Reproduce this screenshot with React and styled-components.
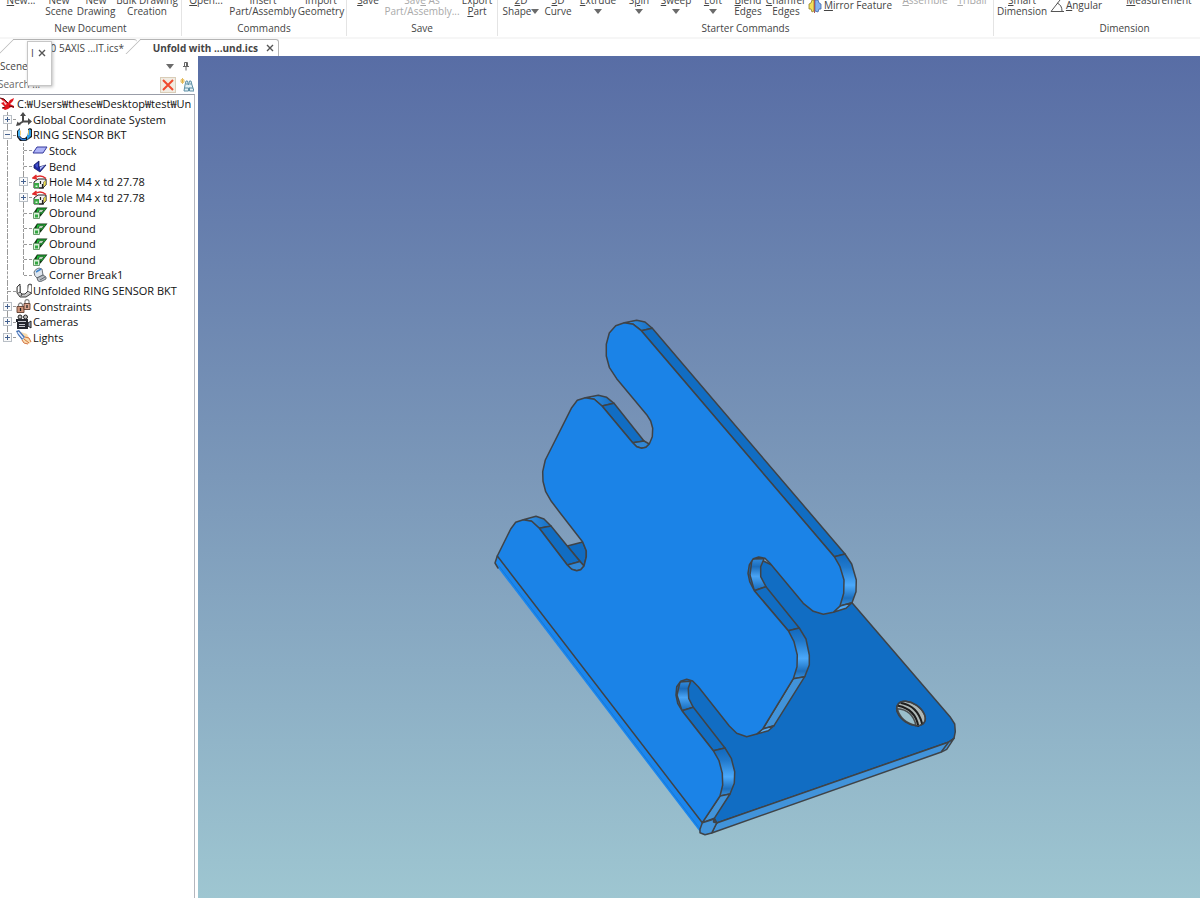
import React from 'react'
import styled, { createGlobalStyle } from 'styled-components'

const GlobalStyle = createGlobalStyle`
    * { box-sizing: border-box; }
    body {
        margin: 0;
        background: #fff;
        color: #444;
        font-family: "Open Sans", "Noto Sans CJK KR", sans-serif;
        font-size: 10px;
        overflow: hidden;
    }
    button, input { font: inherit; color: inherit; }
`

const Page = styled.div`
    display: flex;
    flex-direction: column;
    height: 100vh;
`

/* ribbon */

const Ribbon = styled.header`
    display: flex;
    flex: none;
    height: 39px;
    overflow: hidden;
    border-bottom: 2px solid #f6f6f6;
`

const Group = styled.section`
    display: flex;
    flex: none;
    flex-direction: column;
    justify-content: flex-end;
    width: ${({ width }) => width}px;
    height: 36px;
    border-right: 1px solid #e4e4e4;
`

const Tools = styled.div`
    display: flex;
    flex: none;
    align-items: flex-end;
    padding-left: 1px;
`

const GroupName = styled.div`
    flex: none;
    height: 19px;
    line-height: 22px;
    text-align: center;
`

const ToolButton = styled.button`
    display: flex;
    flex: none;
    flex-direction: column;
    align-items: center;
    width: ${({ width }) => width}px;
    padding: 0;
    border: 0;
    background: none;
    line-height: 11px;
    white-space: nowrap;
    color: ${({ disabled }) => disabled ? '#a9a9a9' : '#444'};
`

const Line = styled.span`
    display: flex;
    align-items: center;
    height: 11px;
`

const WideButton = styled(ToolButton)`
    flex-direction: row;
    justify-content: center;
    gap: 2px;
    height: 23px;
`

const Arrow = styled.span`
    border: 4px solid transparent;
    border-top: 5px solid #6b6b6b;
    border-bottom: 0;
`

/* document tabs */

const TabBar = styled.nav`
    position: relative;
    display: flex;
    flex: none;
    height: 17px;
`

const Tab = styled.div`
    position: relative;
    display: flex;
    align-items: center;
    justify-content: flex-end;
    width: ${({ width }) => width}px;
    margin-left: ${({ active }) => active ? 3 : 13}px;
    padding-right: ${({ active }) => active ? 4 : 13}px;
    border-top: 1px solid #b5b5b5;
    border-right: ${({ active }) => active ? '1px solid #b5b5b5' : '0'};
    border-top-right-radius: 3px;
    font-weight: ${({ active }) => active ? 700 : 400};
    white-space: nowrap;
    gap: 8px;

    &::before {
        content: '';
        position: absolute;
        top: -1px;
        left: -7px;
        width: 1px;
        height: 15px;
        background: #b5b5b5;
        transform: skewX(-45deg);
    }
`

const CloseButton = styled.button`
    display: flex;
    padding: 0;
    border: 0;
    background: none;
`

const Popup = styled.div`
    position: absolute;
    top: 2px;
    left: 27px;
    z-index: 2;
    display: flex;
    justify-content: space-between;
    align-items: flex-start;
    width: 25px;
    height: 45px;
    padding: 7px 5px 0 3px;
    border: 1px solid #c6c6c6;
    background: #fff;
    box-shadow: 1px 1px 3px rgba(0, 0, 0, .25);
    line-height: 8px;
`

/* scene browser */

const Main = styled.main`
    display: flex;
    flex: 1;
    min-height: 0;
`

const Sidebar = styled.aside`
    display: flex;
    flex: none;
    flex-direction: column;
    width: 195px;
    margin-right: 3px;
`

const SideHead = styled.div`
    display: flex;
    align-items: center;
    height: 20px;
    padding-right: 5px;
    gap: 8px;
`

const SideTitle = styled.span`
    flex: 1;
`

const SearchRow = styled.div`
    display: flex;
    align-items: center;
    height: 18px;
    gap: 3px;
`

const SearchInput = styled.input`
    flex: 1;
    min-width: 0;
    height: 18px;
    padding: 0 0 2px;
    margin-left: -2px;
    border: 0;
    outline: 0;

    &::placeholder { color: #666; opacity: 1; }
`

const IconButton = styled.button`
    display: flex;
    align-items: center;
    justify-content: center;
    width: 16px;
    height: 16px;
    padding: 0;
    border: ${({ $framed }) => $framed ? '1px solid #d9cdb8' : '0'};
    background: ${({ $framed }) => $framed ? '#f1ece2' : 'none'};
`

const TreeBox = styled.div`
    flex: 1;
    min-height: 0;
    padding-top: 1px;
    border-top: 1px solid #999da8;
    border-right: 1px solid #b4b6bd;
    overflow: hidden;
`

const Tree = styled.ul`
    display: grid;
    grid-template-rows: repeat(16, 1fr);
    height: 249px;
    margin: 0;
    padding: 0;
    list-style: none;
    color: #111;
    font-size: 11px;
`

const Row = styled.li`
    display: flex;
    align-items: center;
    min-height: 0;
    white-space: nowrap;
`

const Gutter = styled.span`
    position: relative;
    display: flex;
    flex: none;
    align-self: stretch;
    align-items: center;
    justify-content: center;
    width: 16px;

    &::before {
        content: '';
        position: absolute;
        top: 0;
        left: 7px;
        height: ${({ $last }) => $last ? '50%' : '100%'};
        border-left: ${({ $line }) => $line ? '1px dashed #999' : '0'};
    }

    &::after {
        content: '';
        position: absolute;
        top: 50%;
        left: 8px;
        width: 8px;
        border-top: ${({ $branch }) => $branch ? '1px dashed #999' : '0'};
    }
`

const Expander = styled.button`
    position: relative;
    z-index: 1;
    display: flex;
    width: 9px;
    height: 9px;
    margin-right: 1px;
    padding: 0;
    border: 1px solid #b9bfc6;
    background: #fafafa;
`

const Label = styled.span`
    padding-left: 1px;
    line-height: 15px;
`

const Viewport = styled.section`
    flex: 1;
    min-width: 0;
    background: linear-gradient(#586da5, #7b98b9 50%, #9ec6d1);

    svg {
        display: block;
        width: 100%;
        height: 100%;
    }
`

const CloseIcon = () => (
    <svg width="8" height="8" viewBox="0 0 8 8" stroke="#555" strokeWidth="1.4">
        <path d="M1 1l6 6M7 1l-6 6" />
    </svg>
)

const MirrorIcon = () => (
    <svg width="14" height="14" viewBox="0 0 14 14">
        <path d="M6 1v11l-2 1-1-3H1V5l2-1 1-3z" fill="#f2df5a" stroke="#8f7d2c" strokeWidth=".8" />
        <path d="M7 1v11l3 1 1-3h2V5l-2-1-1-3z" fill="#84b1ef" stroke="#4167a8" strokeWidth=".8" />
        <path d="M6.500 0v14" stroke="#a55" />
    </svg>
)

const AngularIcon = () => (
    <svg width="14" height="14" viewBox="0 0 14 14" fill="none" stroke="#555">
        <path d="M14 12.500H1L10 1M7 4q5 2 5 8" />
    </svg>
)

const BinocularsIcon = () => (
    <svg width="14" height="14" viewBox="0 0 14 14">
        <path d="M2.500 0v6M0 3h5M1 1l3 4M4 1L1 5" stroke="#e0ad3a" strokeWidth=".8" />
        <path d="M4 13l1-6 1-4h1.500l1 4 1-4H11l1 4 2 6H9.500v-3h-1v3z" fill="#e3f0f5" stroke="#5c8ea5" />
        <path d="M5 10h3M9 10h4M6 6h2M9.500 6h2" stroke="#5c8ea5" />
    </svg>
)

const PinIcon = () => (
    <svg width="8" height="10" viewBox="0 0 8 10" fill="none" stroke="#666">
        <path d="M2.500 5V1.500h3V5M1 5.500h6M4 6v3.500M4.500 1v4" />
    </svg>
)

const icons = {
    scene: (
        <g>
            <path d="M0 2l4 1 4 4 2-3 4-2-1 3-3 3 4 2v2l-3-1-3 2-3 1-3-2 3-1-4-4 3-1z" fill="#e0141c" />
            <path d="M0 2l4 1 4 4M9 10l5 1M2 12l3-1" stroke="#5e0a0e" fill="none" />
            <path d="M3 4l4 4-2 1z" fill="#fff" opacity=".8" />
        </g>
    ),
    axes: (
        <g fill="#4a4a4a">
            <path d="M7 3v6.500h6M7 9.500L3 12" stroke="#4a4a4a" strokeWidth="2" fill="none" />
            <path d="M4 4l3-4 3 4zM12 6l4 3.500L12 13zM0 14l1.500-4.500L5 13z" />
        </g>
    ),
    bracket: (
        <g strokeLinejoin="round">
            <path d="M1 4l3-3v8l2 2h3l3-3V2l2-1 2 1v8l-6 4H4l-3-4z" fill="#1b1b1b" />
            <path d="M2 4l2-2v7l-1 1-1-1z" fill="#47b4f5" />
            <path d="M13 2l2 1v6l-4 4V9z" fill="#2b9de8" />
            <path d="M3 10l3 2.500h4" stroke="#2b7fe0" strokeWidth="1.500" fill="none" />
            <path d="M4.500 3.500v5M12.500 3v5" stroke="#f1c453" strokeWidth=".8" />
        </g>
    ),
    stock: <path d="M5 4h10l-4 6H1z" fill="#aeb4f7" stroke="#34389b" />,
    bend: (
        <g strokeLinejoin="round">
            <path d="M2 6l5-4v6l7-2-6 7-6-4z" fill="#20299c" stroke="#151b62" strokeWidth=".8" />
            <path d="M8 8l5-2-5 5z" fill="#b5c2fb" />
            <path d="M3 6l3-2v4l-1 1z" fill="#4453cf" />
        </g>
    ),
    hole: (
        <g>
            <path d="M2 8l4-3h8v6l-3 3H2z" fill="#f2f2f2" stroke="#222" />
            <path d="M11.500 8l2.500-2v5l-2.500 2z" fill="#efe04a" stroke="#555" strokeWidth=".6" />
            <path d="M2 9h5v5H2z" fill="#3aa845" />
            <path d="M3.500 11.500h2v1.500h-2z" fill="#dff5df" />
            <path d="M8.500 7v3M10.500 10v4M7 14h5" stroke="#222" strokeWidth="1.200" />
            <path d="M2 4.500q6-5 12 0M4.500 1L1 4l4 1" fill="none" stroke="#e02a2a" strokeWidth="1.500" />
        </g>
    ),
    obround: (
        <g>
            <path d="M5 2.500h10.500L8.500 11.500H7V7H2z" fill="#143a16" />
            <path d="M5.500 3.500h8.500l-4 5H4z" fill="#1dc238" />
            <path d="M7.500 4.800h4.500l-2 2.400H6z" fill="#e9f7e9" stroke="#143a16" strokeWidth=".7" />
            <path d="M1.500 7.500h6v6h-6z" fill="#d8f0d8" stroke="#6a9c6c" />
            <path d="M3 9.500h3v3H3z" fill="#34a843" />
        </g>
    ),
    corner: (
        <g stroke="#4c545c" strokeWidth=".8" strokeLinejoin="round">
            <path d="M2 5q1-3 5-4l3 1 1 6-6 3q-3-2-3-6z" fill="#dfe6ee" />
            <path d="M5 11l6-3 3 2v2l-6 3q-3-1-3-4z" fill="#b9bec4" />
            <path d="M4 5l5-3" stroke="#3e86cf" strokeWidth="1.500" />
            <path d="M8 13l5-3" fill="none" />
        </g>
    ),
    unfolded: (
        <g stroke="#2b2b2b" strokeWidth=".9" strokeLinejoin="round" fill="#c9c9c9">
            <path d="M1 4l3-3v8l2 2h3l3-3V2l2-1 2 1v8l-6 4H4l-3-4z" />
            <path d="M4 3v6l-2 1M6 11l-1 2M12 8l3 2" fill="none" />
            <path d="M13 2l2 1v6l-3-1z" fill="#fff" stroke="none" />
            <path d="M2 4l1.500-1v6L2 9.500z" fill="#fff" stroke="none" />
        </g>
    ),
    constraints: (
        <g stroke="#5e3c30" strokeWidth=".9">
            <path d="M2.500 7V5.500q2-3 4 0V7M9 4V2q2-3 4 0v2" fill="none" stroke="#888" strokeWidth="1.300" />
            <path d="M1 7.500h7v6H1z" fill="#cf957a" />
            <path d="M8 4.500h6v6H8z" fill="#dba58e" />
            <path d="M4.500 9v3M11 6v3" stroke="#222" strokeWidth="1.300" />
        </g>
    ),
    camera: (
        <g>
            <circle cx="4" cy="3" r="2" fill="#bbb" stroke="#222" />
            <circle cx="9.500" cy="3" r="2" fill="#bbb" stroke="#222" />
            <path d="M0 5h12v10H1V8H0z" fill="#23262e" />
            <path d="M12 9l3-2v7l-3-2z" fill="#9aa3b8" stroke="#222" />
            <path d="M2 7h8v1H2zM3 10h6v1H3zM3 12h6v1H3z" fill="#c9cbd2" />
        </g>
    ),
    light: (
        <g>
            <path d="M5 2l6 2 4 8-2 2-6-2z" fill="#f8dcae" />
            <path d="M0 1l3-1 6 7-3 3-4-5z" fill="#4471b5" />
            <path d="M2 2l5 6" stroke="#e7efff" strokeWidth="1.500" />
            <path d="M6 10l2 3 4 1M9 7l4 1 2 4M8 9l5 4" stroke="#d3703c" fill="none" />
        </g>
    ),
}

const NodeIcon = ({ name }) => (
    <svg width="16" height="15" viewBox="0 0 16 15" style={{ flex: 'none' }}>
        {icons[name]}
    </svg>
)

const nodes = [
    { level: 0, icon: 'scene', text: 'C:₩Users₩these₩Desktop₩test₩Un' },
    { level: 1, icon: 'axes', text: 'Global Coordinate System', sign: '+' },
    { level: 1, icon: 'bracket', text: 'RING SENSOR BKT', sign: '-' },
    { level: 2, icon: 'stock', text: 'Stock' },
    { level: 2, icon: 'bend', text: 'Bend' },
    { level: 2, icon: 'hole', text: 'Hole M4 x td 27.78', sign: '+' },
    { level: 2, icon: 'hole', text: 'Hole M4 x td 27.78', sign: '+' },
    { level: 2, icon: 'obround', text: 'Obround' },
    { level: 2, icon: 'obround', text: 'Obround' },
    { level: 2, icon: 'obround', text: 'Obround' },
    { level: 2, icon: 'obround', text: 'Obround' },
    { level: 2, icon: 'corner', text: 'Corner Break1', last: true },
    { level: 1, icon: 'unfolded', text: 'Unfolded RING SENSOR BKT' },
    { level: 1, icon: 'constraints', text: 'Constraints', sign: '+' },
    { level: 1, icon: 'camera', text: 'Cameras', sign: '+' },
    { level: 1, icon: 'light', text: 'Lights', sign: '+', last: true },
]

function TreeNode ({ level, icon, text, sign, last }) {
    return (
        <Row>
            { level === 2 && <Gutter $line /> }
            { level > 0 && (
                <Gutter $line $branch $last={last}>
                    { sign && (
                        <Expander aria-label={`Toggle ${text}`}>
                            <svg width="7" height="7" viewBox="0 0 7 7" stroke="#44618f">
                                <path d={sign === '+' ? 'M1 3.500h5M3.500 1v5' : 'M1 3.500h5'} />
                            </svg>
                        </Expander>
                    ) }
                </Gutter>
            ) }
            <NodeIcon name={icon} />
            <Label>{text}</Label>
        </Row>
    )
}

// "_" goes before the underlined access key
function KeyText ({ text }) {
    const at = text.indexOf('_')
    if( at < 0 ) return <span>{text}</span>
    return (
        <span>{text.slice(0, at)}<u>{text[at + 1]}</u>{text.slice(at + 2)}</span>
    )
}

function Tool ({ top, bottom, width, arrow, disabled }) {
    return (
        <ToolButton width={width} disabled={disabled}>
            <Line><KeyText text={top} /></Line>
            <Line>
                { bottom && <KeyText text={bottom} /> }
                { arrow && <Arrow /> }
            </Line>
        </ToolButton>
    )
}

function BracketModel () {
    return (
        <svg viewBox="198 56 1002 842" preserveAspectRatio="xMidYMid meet" role="img" aria-label="Ring sensor bracket">
            <defs>
                <linearGradient id="round" x1="0" y1="0" x2="0" y2="1">
                    <stop offset="0" stopColor="#1168bd" />
                    <stop offset=".25" stopColor="#2078cb" />
                    <stop offset=".6" stopColor="#4ba9fb" />
                    <stop offset=".85" stopColor="#1c6fbe" />
                    <stop offset="1" stopColor="#3b91dd" />
                </linearGradient>
                <linearGradient id="slot" x1="0" y1="0" x2="0" y2="1">
                    <stop offset="0" stopColor="#338de0" />
                    <stop offset=".25" stopColor="#1b6cbb" />
                    <stop offset=".55" stopColor="#4aa4f5" />
                    <stop offset="1" stopColor="#1369ba" />
                </linearGradient>
                <linearGradient id="cap">
                    <stop offset="0" stopColor="#3793e6" />
                    <stop offset="1" stopColor="#1670c4" />
                </linearGradient>
            </defs>
            <g stroke="#3f4347" strokeWidth="1.500" strokeLinejoin="round" strokeLinecap="round">
                {/* base flange */}
                <path d="M852 602.700L950 716.700L954.700 724L955.300 731.700L954 738.300L948.300 742.300L716.700 823L690 800L670 670L740 550Z" fill="#116dc3" />
                <path d="M948.300 742.300L954 738.300L946.700 749.300L940.700 752.300L711.700 833L716.700 823Z" fill="#4193da" />
                <path d="M948 743L941.500 751.500" />

                {/* outer side of the upper prong */}
                <path d="M624.300 322.700L636.700 320.300L645 322L652.300 328.300L641.300 330.700L633.300 324.300Z" fill="url(#cap)" />
                <path d="M641.300 330.700L652.300 328.300L845 554L834.300 556.700Z" fill="#116dc3" />
                <path d="M834.300 556.700L845 554L851.700 564L856.300 580L856 591.700L852 602.700L840 606L840 580Z" fill="url(#round)" />
                <path d="M840 606L852 602.700L846 608.300L833.300 612.300Z" fill="#4ea9f7" />

                {/* walls of the left notches */}
                <path d="M585.300 397.700L598.300 395.300L606.700 397.300L614 403.300L602 406L594.300 399.300Z" fill="url(#cap)" />
                <path d="M602 406L614 403.300L644 441L632.700 442.700Z" fill="#116dc3" />
                <path d="M632.700 442.700L644 441L649.300 444L646 447.300L641.700 448.300L636.700 446.700Z" fill="#3287d5" />
                <path d="M567.300 546L582.700 542L586.300 550.700L586.300 556.700L584 566Z" fill="#116bc0" />
                <path d="M523.300 519.700L536 516.300L544 519L551 526L539.300 528.300L531.700 521.300Z" fill="url(#cap)" />
                <path d="M539.300 528.300L551 526L567.300 546L580 561.500L567.300 565Z" fill="#116dc3" />
                <path d="M567.300 565L580 561.500L584 566L580.700 569.700L576.700 570.700L571.700 569.300Z" fill="#3287d5" />

                {/* walls of the right slots */}
                <path d="M764 558.700L760.700 566.700L760.700 576.700L766 586.700L754.300 590.700L750 575L752 559Z" fill="url(#slot)" />
                <path d="M754.300 590.700L766 586.700L799.300 628L788.300 630.700Z" fill="#116dc3" />
                <path d="M788.300 630.700L799.300 628L806 639L809.300 655L809.300 665L804.700 676.700L793.300 678.700L794 655Z" fill="url(#round)" />
                <path d="M793.300 678.700L804.700 676.700L774 725.700L762.700 729Z" fill="#4193da" />
                <path d="M762.700 729L774 725.700L768.300 730.700L756.700 734Z" fill="#5aaef5" />
                <path d="M690.700 681.300L688.300 688.300L688.700 698.300L693.300 707.300L682 710.700L677 695L680 682Z" fill="url(#slot)" />
                <path d="M682 710.700L693.300 707.300L725 748L713.300 750.700Z" fill="#116dc3" />
                <path d="M713.300 750.700L725 748L731.300 758.300L734.700 771.700L734.300 783.300L730 794L720 796L719 770Z" fill="url(#round)" />
                <path d="M720 796L730 794L714.300 818.300L702.300 822.700Z" fill="#4193da" />

                {/* bend end and long bend strip */}
                <path d="M497.300 556L495 563L498 568L700 832L702.300 822.700Z" fill="#1b86ed" stroke="none" />
                <path d="M497.300 556L495 563L498 568" fill="none" />
                <path d="M499 566L700 829" stroke="#1679d7" strokeWidth="1" />
                <path d="M702.300 822.700L714.300 819L716.700 823L711.700 833L705 834.700L700 832.700L700 829.300Z" fill="#4193da" />
                <path d="M714.300 818.300L717 823L713.500 822Z" fill="#26547d" />

                {/* front face */}
                <path
                    fill="#1b83e7"
                    d="M497.300 556L510.700 529L515.700 522.300L523.300 519.700L531.700 521.300L539.300 528.300L567.300 565L571.700 569.300L576.700 570.700L580.700 569.700L584 566L586.300 556.700L586.300 550.700L582.700 542L560 512.700L551.300 501.300L545.700 491.700L543 481.300L542.700 471.700L545.300 460L571.300 408.300L577.300 400.300L585.300 397.700L594.300 399.300L602 406L632.700 442.700L636.700 446.700L641.700 448.300L646 447.300L649.300 444L652.300 436.700L652.700 428.300L650.700 421L646.700 414.700L616.700 378.700L609.300 367.300L606.300 356L606.300 344.300L609.300 333L615.700 325.700L624.300 322.700L633.300 324.300L641.300 330.700L834.300 556.700L840 566.700L844 580L843.700 593.300L840 606L833.300 612.300L823.300 614.300L813.300 611.300L803.300 603.300L770 563.300L765 558.300L758.700 557L753.300 558.700L749.300 565L748 573.300L749.700 581.700L754.300 590.700L788.300 630.700L794 641.700L797.300 655L797 666.700L793.300 678.700L762.700 729L756.700 734L746.700 736.700L736.700 733.300L729.300 726L698.300 686.700L692.700 681L686.700 679.300L680.700 681.300L676.700 686.700L676 695L677.700 703.300L682 710.700L713.300 750.700L719 760.700L722.300 773.300L722.700 785L720 796L702.300 822.700Z"
                />

                {/* threaded hole */}
                <g transform="translate(911 713.500) rotate(35)" fill="none">
                    <ellipse rx="16" ry="10" fill="#aeb7b5" />
                    <path d="M-14-3Q1-10 15 2M-15 1Q1-6 13 6" stroke="#1d1d1d" strokeWidth="2" />
                    <path d="M-14 4Q-1-4 11 7Q-3 13-14 4Z" fill="#9bbfcb" stroke="#4b5052" />
                    <ellipse rx="16" ry="10" />
                </g>
            </g>
        </svg>
    )
}

function App () {
    return (
        <Page>
            <GlobalStyle />
            <Ribbon>
                <Group width={182}>
                    <Tools>
                        <Tool width={40} top="_New..." />
                        <Tool width={36} top="New" bottom="Scene" />
                        <Tool width={38} top="New" bottom="Drawing" />
                        <Tool width={64} top="Bulk Drawing" bottom="Creation" />
                    </Tools>
                    <GroupName>New Document</GroupName>
                </Group>
                <Group width={165}>
                    <Tools>
                        <Tool width={46} top="_Open..." />
                        <Tool width={68} top="Insert" bottom="Part/Assembly" />
                        <Tool width={48} top="Import" bottom="Geometry" />
                    </Tools>
                    <GroupName>Commands</GroupName>
                </Group>
                <Group width={151}>
                    <Tools>
                        <Tool width={40} top="_Save" />
                        <Tool width={68} top="Sav_e As" bottom="Part/Assembly..." disabled />
                        <Tool width={42} top="Export" bottom="_Part" />
                    </Tools>
                    <GroupName>Save</GroupName>
                </Group>
                <Group width={496}>
                    <Tools>
                        <Tool width={44} top="_2D" bottom="Shape" arrow />
                        <Tool width={30} top="_3D" bottom="Curve" />
                        <Tool width={50} top="_Extrude" arrow />
                        <Tool width={32} top="S_pin" arrow />
                        <Tool width={42} top="_Sweep" arrow />
                        <Tool width={32} top="_Loft" arrow />
                        <Tool width={38} top="_Blend" bottom="Edges" />
                        <Tool width={38} top="_Chamfer" bottom="Edges" />
                        <WideButton width={90}><MirrorIcon /><KeyText text="_Mirror Feature" /></WideButton>
                        <Tool width={60} top="_Assemble" disabled />
                        <Tool width={34} top="_TriBall" disabled />
                    </Tools>
                    <GroupName>Starter Commands</GroupName>
                </Group>
                <Group width={262}>
                    <Tools>
                        <Tool width={54} top="_Smart" bottom="Dimension" />
                        <WideButton width={54}><AngularIcon /><KeyText text="_Angular" /></WideButton>
                        <Tool width={112} top="_Measurement" />
                    </Tools>
                    <GroupName>Dimension</GroupName>
                </Group>
            </Ribbon>

            <TabBar>
                <Tab width={124}>0 5AXIS ...IT.ics*</Tab>
                <Tab width={139} active>
                    Unfold with ...und.ics
                    <CloseButton aria-label="Close tab"><CloseIcon /></CloseButton>
                </Tab>
                <Popup>
                    <span>I</span>
                    <CloseButton aria-label="Close"><CloseIcon /></CloseButton>
                </Popup>
            </TabBar>

            <Main>
                <Sidebar>
                    <SideHead>
                        <SideTitle>Scene</SideTitle>
                        <Arrow />
                        <PinIcon />
                    </SideHead>
                    <SearchRow>
                        <SearchInput placeholder="Search ..." aria-label="Search" />
                        <IconButton $framed aria-label="Clear search">
                            <svg width="12" height="12" viewBox="0 0 12 12" stroke="#f04a2f" strokeWidth="2">
                                <path d="M1 1l10 10M11 1L1 11" />
                            </svg>
                        </IconButton>
                        <IconButton aria-label="Find"><BinocularsIcon /></IconButton>
                    </SearchRow>
                    <TreeBox>
                        <Tree>
                            { nodes.map((node, i) => <TreeNode key={i} {...node} />) }
                        </Tree>
                    </TreeBox>
                </Sidebar>
                <Viewport>
                    <BracketModel />
                </Viewport>
            </Main>
        </Page>
    )
}

export default App
